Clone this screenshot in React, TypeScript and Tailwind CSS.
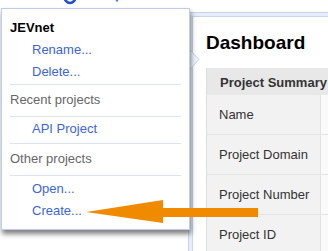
import React from 'react';

const LINK = 'text-[#3d64d8]';

const SUMMARY_ROWS = ['Name', 'Project Domain', 'Project Number', 'Project ID'];

function Separator() {
  return <div className="mx-[8px] h-px bg-[#dce4f2]" />;
}

function MenuLink({ label }: { label: string }) {
  return <div className={`h-[22px] pl-[30px] leading-[22px] ${LINK}`}>{label}</div>;
}

function MenuHeading({ label }: { label: string }) {
  return <div className="h-[22px] pl-[8px] leading-[22px] text-[#666]">{label}</div>;
}

export default function App() {
  return (
    <div
      className="relative w-[328px] h-[251px] overflow-hidden bg-white text-[13px] text-[#222]"
      style={{ fontFamily: '"Liberation Sans", Arial, sans-serif' }}
    >
      {/* logo fragment cut off at the top */}
      <div className="h-[12px] relative">
        <svg className="absolute left-0 top-0" width="140" height="12" viewBox="0 0 140 12">
          <ellipse cx="70" cy="-3" rx="5.5" ry="6" fill="none" stroke="#1f4fd1" strokeWidth="2.6" />
          <circle cx="117" cy="0.5" r="1.2" fill="#5b7fe0" />
        </svg>
      </div>

      {/* page frame behind the menu */}
      <div className="flex h-[239px]">
        <div className="w-[188px] shrink-0" />
        <div className="flex-1 border-l border-t border-[#c4d4ef] bg-[#e6edf9] pl-[3px] pt-[3px]">
          <div className="h-full border-l border-t border-[#c9d6ec] bg-white pl-[13px]">
            <h1 className="mt-[15px] text-[19px] leading-[22px] font-bold text-black whitespace-nowrap">Dashboard</h1>
            <div className="mt-[14px] border-l border-[#dedede] whitespace-nowrap">
              <div className="h-[28px] bg-[#e8e8e8] pl-[13px] pt-[2px] leading-[26px] font-bold text-[#333] border-b border-[#e0e0e0] -mb-px">
                Project Summary
              </div>
              {SUMMARY_ROWS.map((row) => (
                <div key={row} className="flex h-[40px] border-b border-[#e3e3e3]">
                  <div className="w-[114px] shrink-0 bg-[#f2f2f2] pl-[12px] leading-[39px] text-[#333] border-r border-[#e3e3e3]">
                    {row}
                  </div>
                  <div className="flex-1 bg-[#fafafa]" />
                </div>
              ))}
            </div>
          </div>
        </div>
      </div>

      {/* callout notch on the frame */}
      <svg className="absolute left-[189px] top-[49px]" width="12" height="22" viewBox="0 0 12 22">
        <polygon points="0.5,0.5 10,10.5 0.5,21" fill="#eef3fb" stroke="#c4d3ec" strokeWidth="1" />
      </svg>

      {/* project dropdown menu */}
      <div className="absolute left-[1px] top-[8px] w-[189px] h-[222px] border border-[#bfcde8] bg-white pt-[8px] shadow-[1px_4px_5px_rgba(0,0,0,0.5)] whitespace-nowrap">
        <div className="h-[22px] pl-[8px] leading-[22px] font-bold text-black">JEVnet</div>
        <MenuLink label="Rename..." />
        <MenuLink label="Delete..." />
        <div className="mt-[1px]">
          <Separator />
        </div>
        <div className="mt-[4px]">
          <MenuHeading label="Recent projects" />
        </div>
        <div className="mt-[5px]">
          <Separator />
        </div>
        <div className="mt-[1px]">
          <MenuLink label="API Project" />
        </div>
        <div className="mt-[3px]">
          <Separator />
        </div>
        <div className="mt-[4px]">
          <MenuHeading label="Other projects" />
        </div>
        <div className="mt-[5px]">
          <Separator />
        </div>
        <div className="mt-[2px]">
          <MenuLink label="Open..." />
          <MenuLink label="Create..." />
        </div>
      </div>

      {/* orange annotation arrow */}
      <svg className="absolute left-0 top-0 pointer-events-none" width="328" height="251" viewBox="0 0 328 251">
        <polygon points="86,212 163,200 163,208 258,208 258,217 163,217 163,223" fill="#f08a00" />
      </svg>
    </div>
  );
}
